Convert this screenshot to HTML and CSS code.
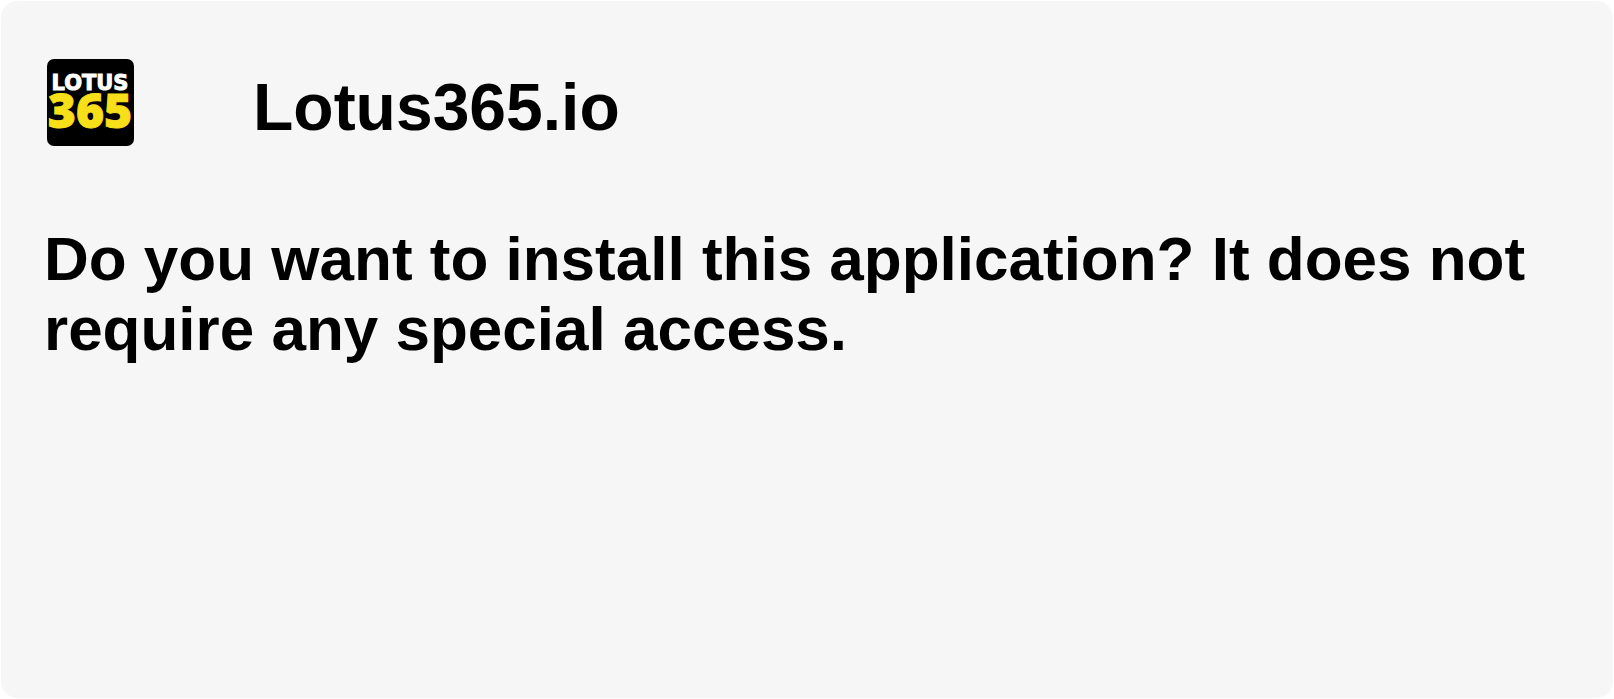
FILE: index.html
```
<!DOCTYPE html>
<html lang="en">
<head>
<meta charset="utf-8">
<title>Lotus365.io</title>
<link rel="stylesheet" href="styles.css">
</head>
<body>
<main class="dialog">
  <header class="app">
    <svg class="app-icon" viewBox="0 0 87 87" role="img" aria-label="Lotus 365">
      <rect width="87" height="87" rx="7" fill="#000"/>
      <text text-anchor="middle"><tspan class="logo-top" x="43" y="31">LOTUS</tspan><tspan class="logo-bottom" x="43" y="69">365</tspan></text>
    </svg>
    <h1 class="app-name">Lotus365.io</h1>
  </header>
  <p class="question">Do you want to install this application? It does not require any special access.</p>
</main>
</body>
</html>
```
FILE: styles.css
```
* { box-sizing: border-box; }
body {
  margin: 0;
  background: #fff;
  color: #000;
  font-family: "Liberation Sans", Arial, sans-serif;
}
.dialog {
  min-height: 100vh;
  padding: 58px 43px;
  background: #f6f6f6;
  border: 1px solid #fff;
  border-radius: 18px;
}
.app {
  display: flex;
  align-items: flex-start;
  gap: 119px;
}
.app-icon {
  flex: none;
  width: 87px;
  height: 87px;
  margin-left: 3px;
}
.logo-top {
  font: 700 21px "DejaVu Sans", sans-serif;
  fill: #fff;
  stroke: #fff;
  stroke-width: 1px;
}
.logo-bottom {
  font: 800 48px "Open Sans", sans-serif;
  fill: #f7df1a;
  stroke: #f7df1a;
  stroke-width: 1px;
}
.app-name {
  margin: 0;
  font-size: 66px;
  line-height: 96px;
  font-weight: 700;
}
.question {
  margin: 69px 0 0;
  font-size: 62px;
  line-height: 70px;
  font-weight: 700;
}
```
